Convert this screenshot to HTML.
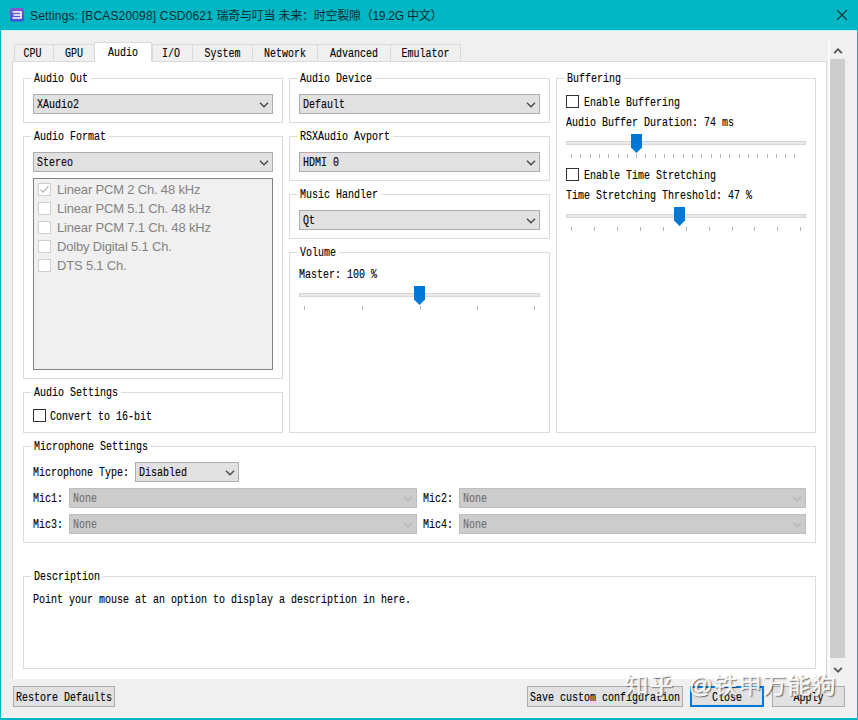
<!DOCTYPE html>
<html><head><meta charset="utf-8"><title>Settings</title>
<style>
html,body{margin:0;padding:0}
body{width:858px;height:720px;position:relative;overflow:hidden;background:#f0f0f0;font-family:"Liberation Mono",monospace}
.t{position:absolute;font:10px/12px "Liberation Mono","Noto Sans CJK SC",monospace;height:12px;white-space:pre;transform:scaleY(1.2);transform-origin:50% 50%;-webkit-text-stroke:0.1px currentColor}
.t.c{text-align:center}
.gb{position:absolute;border:1px solid #dcdcdc}
.tab{position:absolute;box-sizing:border-box;border:1px solid #d9d9d9;border-bottom:none;background:#f0f0f0}
.btn{position:absolute;box-sizing:border-box;border:1px solid #adadad;background:#e1e1e1}
.li{position:absolute;font:13px/15px "Liberation Sans",sans-serif;color:#838383;white-space:pre;letter-spacing:-0.18px}
</style></head><body>

<div class="" style="position:absolute;left:0px;top:0px;width:858px;height:30px;background:#00b7c3"></div>
<div class="" style="position:absolute;left:0px;top:30px;width:858px;height:1px;background:#c9f3f8"></div>
<svg style="position:absolute;left:10px;top:8.3px" width="14" height="14" viewBox="0 0 14 14"><defs><linearGradient id="ig" x1="0" y1="0" x2="0" y2="1"><stop offset="0" stop-color="#8a52cf"/><stop offset="1" stop-color="#3f4fd2"/></linearGradient></defs><rect x="0" y="0" width="14" height="13.5" rx="2.5" fill="url(#ig)"/><path d="M2.5 4H11V10H2.5M3.5 7H11" fill="none" stroke="#fff" stroke-width="1.5"/></svg>
<div style="position:absolute;left:30px;top:7.5px;font:12px/16px 'Liberation Sans','Noto Sans CJK SC',sans-serif;color:#062c31;white-space:pre" id="title"><span style="letter-spacing:0.17px">Settings: [BCAS20098] CSD0621 </span><span style="letter-spacing:-0.25px">瑞奇与叮当 未来：时空裂隙（19.2G 中文）</span></div>
<svg style="position:absolute;left:836px;top:9px" width="12" height="12" viewBox="0 0 12 12"><path d="M1 1L11 11M11 1L1 11" stroke="#12343a" stroke-width="1.1" fill="none"/></svg>
<div class="" style="position:absolute;left:12px;top:61px;width:815px;height:618px;background:#fff;border:1px solid #d9d9d9;border-bottom:none;box-sizing:border-box"></div>
<div class="" style="position:absolute;left:828px;top:40px;width:2px;height:639px;background:#fcfcfc"></div>
<div class="" style="position:absolute;left:830px;top:59px;width:15px;height:599px;background:#cdcdcd"></div>
<svg style="position:absolute;left:833px;top:47px" width="10" height="8" viewBox="0 0 10 8"><path d="M1.2 6.2L5 2.2L8.8 6.2" fill="none" stroke="#505050" stroke-width="1.8"/></svg>
<svg style="position:absolute;left:833px;top:666px" width="10" height="8" viewBox="0 0 10 8"><path d="M1.2 1.8L5 5.8L8.8 1.8" fill="none" stroke="#505050" stroke-width="1.8"/></svg>
<div class="" style="position:absolute;left:850px;top:32px;width:7px;height:686px;background:#f4eeee"></div>
<div class="tab" style="left:14px;top:44px;width:40px;height:17px"></div>
<span class="t c" style="left:12.5px;width:40px;top:49.0px;color:#000">CPU</span>
<div class="tab" style="left:53px;top:44px;width:42px;height:17px"></div>
<span class="t c" style="left:53px;width:42px;top:49.0px;color:#000">GPU</span>
<div class="tab" style="left:152px;top:44px;width:41px;height:17px"></div>
<span class="t c" style="left:150.5px;width:41px;top:49.0px;color:#000">I/O</span>
<div class="tab" style="left:192px;top:44px;width:61px;height:17px"></div>
<span class="t c" style="left:192px;width:61px;top:49.0px;color:#000">System</span>
<div class="tab" style="left:252px;top:44px;width:66px;height:17px"></div>
<span class="t c" style="left:252px;width:66px;top:49.0px;color:#000">Network</span>
<div class="tab" style="left:317px;top:44px;width:74px;height:17px"></div>
<span class="t c" style="left:317px;width:74px;top:49.0px;color:#000">Advanced</span>
<div class="tab" style="left:390px;top:44px;width:71px;height:17px"></div>
<span class="t c" style="left:390px;width:71px;top:49.0px;color:#000">Emulator</span>
<div class="tab" style="left:94px;top:42px;width:58px;height:20px;background:#fff"></div>
<span class="t c" style="left:94px;width:58px;top:47.5px;color:#000">Audio</span>
<div class="gb" style="left:23px;top:78px;width:258px;height:43px"></div>
<div style="position:absolute;left:31px;top:76px;width:60px;height:5px;background:#fff"></div>
<span class="t" style="left:34px;top:74.0px;color:#000;">Audio Out</span>
<div class="" style="position:absolute;left:33px;top:94px;width:240px;height:20px;background:#e1e1e1;border:1px solid #adadad;box-sizing:border-box"></div>
<span class="t" style="left:37px;top:100.0px;color:#000;">XAudio2</span>
<svg style="position:absolute;left:259px;top:101.5px" width="10" height="6" viewBox="0 0 10 6"><path d="M1 0.8 L5 4.8 L9 0.8" fill="none" stroke="#444" stroke-width="1.25"/></svg>
<div class="gb" style="left:23px;top:136px;width:258px;height:241px"></div>
<div style="position:absolute;left:31px;top:134px;width:78px;height:5px;background:#fff"></div>
<span class="t" style="left:34px;top:132.0px;color:#000;">Audio Format</span>
<div class="" style="position:absolute;left:33px;top:152px;width:240px;height:20px;background:#e1e1e1;border:1px solid #adadad;box-sizing:border-box"></div>
<span class="t" style="left:37px;top:158.0px;color:#000;">Stereo</span>
<svg style="position:absolute;left:259px;top:159.5px" width="10" height="6" viewBox="0 0 10 6"><path d="M1 0.8 L5 4.8 L9 0.8" fill="none" stroke="#444" stroke-width="1.25"/></svg>
<div class="" style="position:absolute;left:33px;top:178px;width:240px;height:192px;background:#f0f0f0;border:1px solid #828282;box-sizing:border-box"></div>
<div class="" style="position:absolute;left:38px;top:183px;width:13px;height:13px;background:#fff;border:1px solid #cfcfcf;box-sizing:border-box"></div>
<svg style="position:absolute;left:38px;top:183px" width="13" height="13" viewBox="0 0 13 13"><path d="M2.5 6.5L5.2 9.2L10.5 3.2" fill="none" stroke="#b0b0b0" stroke-width="1.2"/></svg>
<div class="li" style="left:57px;top:182px">Linear PCM 2 Ch. 48 kHz</div>
<div class="" style="position:absolute;left:38px;top:202px;width:13px;height:13px;background:#fff;border:1px solid #cfcfcf;box-sizing:border-box"></div>
<div class="li" style="left:57px;top:201px">Linear PCM 5.1 Ch. 48 kHz</div>
<div class="" style="position:absolute;left:38px;top:221px;width:13px;height:13px;background:#fff;border:1px solid #cfcfcf;box-sizing:border-box"></div>
<div class="li" style="left:57px;top:220px">Linear PCM 7.1 Ch. 48 kHz</div>
<div class="" style="position:absolute;left:38px;top:240px;width:13px;height:13px;background:#fff;border:1px solid #cfcfcf;box-sizing:border-box"></div>
<div class="li" style="left:57px;top:239px">Dolby Digital 5.1 Ch.</div>
<div class="" style="position:absolute;left:38px;top:259px;width:13px;height:13px;background:#fff;border:1px solid #cfcfcf;box-sizing:border-box"></div>
<div class="li" style="left:57px;top:258px">DTS 5.1 Ch.</div>
<div class="gb" style="left:23px;top:392px;width:258px;height:39px"></div>
<div style="position:absolute;left:31px;top:390px;width:90px;height:5px;background:#fff"></div>
<span class="t" style="left:34px;top:388.0px;color:#000;">Audio Settings</span>
<div class="" style="position:absolute;left:33px;top:409px;width:13px;height:13px;background:#fff;border:1px solid #333;box-sizing:border-box"></div>
<span class="t" style="left:50px;top:412.0px;color:#000;">Convert to 16-bit</span>
<div class="gb" style="left:289px;top:78px;width:259px;height:43px"></div>
<div style="position:absolute;left:297px;top:76px;width:78px;height:5px;background:#fff"></div>
<span class="t" style="left:300px;top:74.0px;color:#000;">Audio Device</span>
<div class="" style="position:absolute;left:299px;top:94px;width:241px;height:20px;background:#e1e1e1;border:1px solid #adadad;box-sizing:border-box"></div>
<span class="t" style="left:303px;top:100.0px;color:#000;">Default</span>
<svg style="position:absolute;left:526px;top:101.5px" width="10" height="6" viewBox="0 0 10 6"><path d="M1 0.8 L5 4.8 L9 0.8" fill="none" stroke="#444" stroke-width="1.25"/></svg>
<div class="gb" style="left:289px;top:136px;width:259px;height:43px"></div>
<div style="position:absolute;left:297px;top:134px;width:96px;height:5px;background:#fff"></div>
<span class="t" style="left:300px;top:132.0px;color:#000;">RSXAudio Avport</span>
<div class="" style="position:absolute;left:299px;top:152px;width:241px;height:20px;background:#e1e1e1;border:1px solid #adadad;box-sizing:border-box"></div>
<span class="t" style="left:303px;top:158.0px;color:#000;">HDMI 0</span>
<svg style="position:absolute;left:526px;top:159.5px" width="10" height="6" viewBox="0 0 10 6"><path d="M1 0.8 L5 4.8 L9 0.8" fill="none" stroke="#444" stroke-width="1.25"/></svg>
<div class="gb" style="left:289px;top:194px;width:259px;height:43px"></div>
<div style="position:absolute;left:297px;top:192px;width:84px;height:5px;background:#fff"></div>
<span class="t" style="left:300px;top:190.0px;color:#000;">Music Handler</span>
<div class="" style="position:absolute;left:299px;top:210px;width:241px;height:20px;background:#e1e1e1;border:1px solid #adadad;box-sizing:border-box"></div>
<span class="t" style="left:303px;top:216.0px;color:#000;">Qt</span>
<svg style="position:absolute;left:526px;top:217.5px" width="10" height="6" viewBox="0 0 10 6"><path d="M1 0.8 L5 4.8 L9 0.8" fill="none" stroke="#444" stroke-width="1.25"/></svg>
<div class="gb" style="left:289px;top:252px;width:259px;height:179px"></div>
<div style="position:absolute;left:297px;top:250px;width:42px;height:5px;background:#fff"></div>
<span class="t" style="left:300px;top:248.0px;color:#000;">Volume</span>
<span class="t" style="left:299px;top:270.0px;color:#000;">Master: 100 %</span>
<div class="" style="position:absolute;left:299px;top:293px;width:241px;height:4px;background:#e7eaea;border:1px solid #d6d6d6;box-sizing:border-box"></div>
<svg style="position:absolute;left:414px;top:286px" width="11" height="19" viewBox="0 0 11 19"><path d="M0 0 H11 V13.5 L5.5 19 L0 13.5 Z" fill="#0078d7"/></svg>
<div class="" style="position:absolute;left:304px;top:306px;width:1px;height:4px;background:#b4b4b4"></div>
<div class="" style="position:absolute;left:362px;top:306px;width:1px;height:4px;background:#b4b4b4"></div>
<div class="" style="position:absolute;left:420px;top:306px;width:1px;height:4px;background:#b4b4b4"></div>
<div class="" style="position:absolute;left:477px;top:306px;width:1px;height:4px;background:#b4b4b4"></div>
<div class="" style="position:absolute;left:534px;top:306px;width:1px;height:4px;background:#b4b4b4"></div>
<div class="gb" style="left:556px;top:78px;width:258px;height:353px"></div>
<div style="position:absolute;left:564px;top:76px;width:60px;height:5px;background:#fff"></div>
<span class="t" style="left:567px;top:74.0px;color:#000;">Buffering</span>
<div class="" style="position:absolute;left:566px;top:95px;width:13px;height:13px;background:#fff;border:1px solid #333;box-sizing:border-box"></div>
<span class="t" style="left:584px;top:98.0px;color:#000;">Enable Buffering</span>
<span class="t" style="left:566px;top:118.0px;color:#000;">Audio Buffer Duration: 74 ms</span>
<div class="" style="position:absolute;left:566px;top:141px;width:240px;height:4px;background:#e7eaea;border:1px solid #d6d6d6;box-sizing:border-box"></div>
<svg style="position:absolute;left:631px;top:134px" width="11" height="19" viewBox="0 0 11 19"><path d="M0 0 H11 V13.5 L5.5 19 L0 13.5 Z" fill="#0078d7"/></svg>
<div class="" style="position:absolute;left:571px;top:154px;width:1px;height:4px;background:#b4b4b4"></div>
<div class="" style="position:absolute;left:580px;top:154px;width:1px;height:4px;background:#b4b4b4"></div>
<div class="" style="position:absolute;left:590px;top:154px;width:1px;height:4px;background:#b4b4b4"></div>
<div class="" style="position:absolute;left:599px;top:154px;width:1px;height:4px;background:#b4b4b4"></div>
<div class="" style="position:absolute;left:608px;top:154px;width:1px;height:4px;background:#b4b4b4"></div>
<div class="" style="position:absolute;left:618px;top:154px;width:1px;height:4px;background:#b4b4b4"></div>
<div class="" style="position:absolute;left:627px;top:154px;width:1px;height:4px;background:#b4b4b4"></div>
<div class="" style="position:absolute;left:636px;top:154px;width:1px;height:4px;background:#b4b4b4"></div>
<div class="" style="position:absolute;left:645px;top:154px;width:1px;height:4px;background:#b4b4b4"></div>
<div class="" style="position:absolute;left:655px;top:154px;width:1px;height:4px;background:#b4b4b4"></div>
<div class="" style="position:absolute;left:664px;top:154px;width:1px;height:4px;background:#b4b4b4"></div>
<div class="" style="position:absolute;left:673px;top:154px;width:1px;height:4px;background:#b4b4b4"></div>
<div class="" style="position:absolute;left:683px;top:154px;width:1px;height:4px;background:#b4b4b4"></div>
<div class="" style="position:absolute;left:692px;top:154px;width:1px;height:4px;background:#b4b4b4"></div>
<div class="" style="position:absolute;left:701px;top:154px;width:1px;height:4px;background:#b4b4b4"></div>
<div class="" style="position:absolute;left:711px;top:154px;width:1px;height:4px;background:#b4b4b4"></div>
<div class="" style="position:absolute;left:720px;top:154px;width:1px;height:4px;background:#b4b4b4"></div>
<div class="" style="position:absolute;left:729px;top:154px;width:1px;height:4px;background:#b4b4b4"></div>
<div class="" style="position:absolute;left:739px;top:154px;width:1px;height:4px;background:#b4b4b4"></div>
<div class="" style="position:absolute;left:748px;top:154px;width:1px;height:4px;background:#b4b4b4"></div>
<div class="" style="position:absolute;left:757px;top:154px;width:1px;height:4px;background:#b4b4b4"></div>
<div class="" style="position:absolute;left:767px;top:154px;width:1px;height:4px;background:#b4b4b4"></div>
<div class="" style="position:absolute;left:776px;top:154px;width:1px;height:4px;background:#b4b4b4"></div>
<div class="" style="position:absolute;left:785px;top:154px;width:1px;height:4px;background:#b4b4b4"></div>
<div class="" style="position:absolute;left:794px;top:154px;width:1px;height:4px;background:#b4b4b4"></div>
<div class="" style="position:absolute;left:566px;top:168px;width:13px;height:13px;background:#fff;border:1px solid #333;box-sizing:border-box"></div>
<span class="t" style="left:584px;top:171.0px;color:#000;">Enable Time Stretching</span>
<span class="t" style="left:566px;top:191.0px;color:#000;">Time Stretching Threshold: 47 %</span>
<div class="" style="position:absolute;left:566px;top:214px;width:240px;height:4px;background:#e7eaea;border:1px solid #d6d6d6;box-sizing:border-box"></div>
<svg style="position:absolute;left:674px;top:207px" width="11" height="19" viewBox="0 0 11 19"><path d="M0 0 H11 V13.5 L5.5 19 L0 13.5 Z" fill="#0078d7"/></svg>
<div class="" style="position:absolute;left:571px;top:227px;width:1px;height:4px;background:#b4b4b4"></div>
<div class="" style="position:absolute;left:594px;top:227px;width:1px;height:4px;background:#b4b4b4"></div>
<div class="" style="position:absolute;left:617px;top:227px;width:1px;height:4px;background:#b4b4b4"></div>
<div class="" style="position:absolute;left:640px;top:227px;width:1px;height:4px;background:#b4b4b4"></div>
<div class="" style="position:absolute;left:663px;top:227px;width:1px;height:4px;background:#b4b4b4"></div>
<div class="" style="position:absolute;left:686px;top:227px;width:1px;height:4px;background:#b4b4b4"></div>
<div class="" style="position:absolute;left:709px;top:227px;width:1px;height:4px;background:#b4b4b4"></div>
<div class="" style="position:absolute;left:732px;top:227px;width:1px;height:4px;background:#b4b4b4"></div>
<div class="" style="position:absolute;left:754px;top:227px;width:1px;height:4px;background:#b4b4b4"></div>
<div class="" style="position:absolute;left:777px;top:227px;width:1px;height:4px;background:#b4b4b4"></div>
<div class="" style="position:absolute;left:800px;top:227px;width:1px;height:4px;background:#b4b4b4"></div>
<div class="gb" style="left:23px;top:446px;width:791px;height:95px"></div>
<div style="position:absolute;left:31px;top:444px;width:120px;height:5px;background:#fff"></div>
<span class="t" style="left:34px;top:442.0px;color:#000;">Microphone Settings</span>
<span class="t" style="left:33px;top:468.0px;color:#000;">Microphone Type:</span>
<div class="" style="position:absolute;left:135px;top:462px;width:104px;height:20px;background:#e1e1e1;border:1px solid #adadad;box-sizing:border-box"></div>
<span class="t" style="left:139px;top:468.0px;color:#000;">Disabled</span>
<svg style="position:absolute;left:225px;top:469.5px" width="10" height="6" viewBox="0 0 10 6"><path d="M1 0.8 L5 4.8 L9 0.8" fill="none" stroke="#444" stroke-width="1.25"/></svg>
<span class="t" style="left:33px;top:494.0px;color:#000;">Mic1:</span>
<div class="" style="position:absolute;left:69px;top:488px;width:348px;height:20px;background:#ccc;border:1px solid #bfbfbf;box-sizing:border-box"></div>
<span class="t" style="left:73px;top:494.0px;color:#707070;">None</span>
<svg style="position:absolute;left:403px;top:495.5px" width="10" height="6" viewBox="0 0 10 6"><path d="M1 0.8 L5 4.8 L9 0.8" fill="none" stroke="#b8b8b8" stroke-width="1.25"/></svg>
<span class="t" style="left:423px;top:494.0px;color:#000;">Mic2:</span>
<div class="" style="position:absolute;left:459px;top:488px;width:347px;height:20px;background:#ccc;border:1px solid #bfbfbf;box-sizing:border-box"></div>
<span class="t" style="left:463px;top:494.0px;color:#707070;">None</span>
<svg style="position:absolute;left:792px;top:495.5px" width="10" height="6" viewBox="0 0 10 6"><path d="M1 0.8 L5 4.8 L9 0.8" fill="none" stroke="#b8b8b8" stroke-width="1.25"/></svg>
<span class="t" style="left:33px;top:520.0px;color:#000;">Mic3:</span>
<div class="" style="position:absolute;left:69px;top:514px;width:348px;height:20px;background:#ccc;border:1px solid #bfbfbf;box-sizing:border-box"></div>
<span class="t" style="left:73px;top:520.0px;color:#707070;">None</span>
<svg style="position:absolute;left:403px;top:521.5px" width="10" height="6" viewBox="0 0 10 6"><path d="M1 0.8 L5 4.8 L9 0.8" fill="none" stroke="#b8b8b8" stroke-width="1.25"/></svg>
<span class="t" style="left:423px;top:520.0px;color:#000;">Mic4:</span>
<div class="" style="position:absolute;left:459px;top:514px;width:347px;height:20px;background:#ccc;border:1px solid #bfbfbf;box-sizing:border-box"></div>
<span class="t" style="left:463px;top:520.0px;color:#707070;">None</span>
<svg style="position:absolute;left:792px;top:521.5px" width="10" height="6" viewBox="0 0 10 6"><path d="M1 0.8 L5 4.8 L9 0.8" fill="none" stroke="#b8b8b8" stroke-width="1.25"/></svg>
<div class="gb" style="left:23px;top:576px;width:791px;height:91px"></div>
<div style="position:absolute;left:31px;top:574px;width:72px;height:5px;background:#fff"></div>
<span class="t" style="left:34px;top:572.0px;color:#000;">Description</span>
<span class="t" style="left:33px;top:594.5px;color:#000;">Point your mouse at an option to display a description in here.</span>
<div class="btn" style="left:13px;top:686px;width:102px;height:21px"></div>
<span class="t c" style="left:13px;width:102px;top:692.5px;color:#000">Restore Defaults</span>
<div class="btn" style="left:527px;top:686px;width:156px;height:21px"></div>
<span class="t c" style="left:527px;width:156px;top:692.5px;color:#000">Save custom configuration</span>
<div class="btn" style="left:690px;top:686px;width:74px;height:21px;border:2px solid #0078d7"></div>
<span class="t c" style="left:690px;width:74px;top:692.5px;color:#000">Close</span>
<div class="btn" style="left:772px;top:686px;width:73px;height:21px"></div>
<span class="t c" style="left:772px;width:73px;top:692.5px;color:#000">Apply</span>
<div style="position:absolute;left:625px;top:670.3px;font:23.5px/34px 'Liberation Sans','Noto Sans CJK SC',sans-serif;letter-spacing:1.1px;word-spacing:7px;color:rgba(255,255,255,0.9);-webkit-text-stroke:0.5px rgba(255,255,255,0.9);text-shadow:1px 1px 0.8px rgba(0,0,0,0.5),1.5px 1.5px 2px rgba(0,0,0,0.2);transform:scaleY(0.92);transform-origin:0 0;white-space:pre" id="wm">知乎 @铁甲万能狗</div>
<div class="" style="position:absolute;left:1px;top:31px;width:1px;height:687px;background:#dff7fa"></div>
<div class="" style="position:absolute;left:856px;top:31px;width:1px;height:687px;background:#dff7fa"></div>
<div class="" style="position:absolute;left:1px;top:717px;width:856px;height:1px;background:#dff7fa"></div>
<div class="" style="position:absolute;left:0px;top:0px;width:1px;height:720px;background:#00b7c3"></div>
<div class="" style="position:absolute;left:857px;top:0px;width:1px;height:720px;background:#00b7c3"></div>
<div class="" style="position:absolute;left:0px;top:718px;width:858px;height:2px;background:#00b7c3"></div>
</body></html>
